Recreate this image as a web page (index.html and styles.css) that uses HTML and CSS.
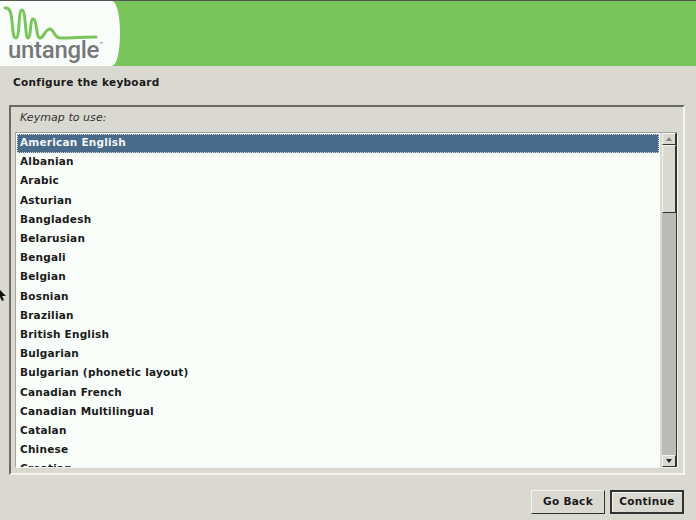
FILE: index.html
```html
<!DOCTYPE html>
<html lang="en">
<head>
<meta charset="utf-8">
<title>Configure the keyboard</title>
<link rel="stylesheet" href="styles.css">
</head>
<body>
<div class="screen">
  <header class="banner">
    <div class="logo">
      <svg class="logo-wave" width="100" height="44" viewBox="0 0 100 44"><path d="M5 7C10 6 11 12 12 20C13 30 13 37 16 37C20 37 18 9 22 9C26 9 25 37 28 37C31 37 30 18 33 18C37 18 36 37 40 37C44 37 45 28 50 28C54 28 54 37 60 37C72 37 85 36 96 36" fill="none" stroke="#79c55b" stroke-width="3" stroke-linecap="round"/></svg>
      <span class="logo-text">untangle<sup class="tm">™</sup></span>
    </div>
  </header>
  <h1 class="title">Configure the keyboard</h1>
  <section class="frame">
    <div class="prompt">Keymap to use:</div>
    <div class="listbox">
      <ul class="list">
        <li class="sel">American English</li>
        <li>Albanian</li>
        <li>Arabic</li>
        <li>Asturian</li>
        <li>Bangladesh</li>
        <li>Belarusian</li>
        <li>Bengali</li>
        <li>Belgian</li>
        <li>Bosnian</li>
        <li>Brazilian</li>
        <li>British English</li>
        <li>Bulgarian</li>
        <li>Bulgarian (phonetic layout)</li>
        <li>Canadian French</li>
        <li>Canadian Multilingual</li>
        <li>Catalan</li>
        <li>Chinese</li>
        <li>Croatian</li>
      </ul>
      <div class="scrollbar">
        <div class="arrow"><span class="tri up"></span></div>
        <div class="track">
          <div class="thumb"></div>
        </div>
        <div class="arrow"><span class="tri down"></span></div>
      </div>
    </div>
  </section>
  <footer class="actions">
    <button class="btn">Go Back</button>
    <button class="btn default">Continue</button>
  </footer>
  <svg class="cursor" width="8" height="14" viewBox="0 0 8 14"><path d="M-2 1L6 9H2L4 13L2 14L0 10L-2 12Z" fill="#111"/></svg>
</div>
</body>
</html>
```
FILE: styles.css
```css
* { box-sizing: border-box; }
html, body { margin: 0; padding: 0; }
body { font-family: "DejaVu Sans", sans-serif; background: #d9d8d1; color: #111; }
.screen { position: relative; width: 696px; height: 520px; overflow: hidden; background: #d9d8d1; display: flex; flex-direction: column; }
.banner { height: 66px; flex: none; background: #79c55b; border-top: 1px solid #555; display: flex; }
.logo { position: relative; width: 120px; height: 65px; background: #f8fdf9; border-radius: 0 8px 8px 0 / 0 32px 32px 0; overflow: hidden; }
.logo-wave { position: absolute; left: 0; top: 0; }
.logo-text { position: absolute; left: 8px; top: 37px; font-family: "Roboto", "DejaVu Sans", sans-serif; font-weight: 500; font-size: 24px; line-height: 24px; color: #77787b; letter-spacing: -0.3px; }
.tm { font-size: 6px; vertical-align: 12px; line-height: 0; letter-spacing: 0; }
.title { margin: 0; height: 34px; flex: none; padding: 9px 0 0 13px; font-size: 10.5px; line-height: 14px; font-weight: 700; letter-spacing: 0.3px; color: #1a1a1a; }
.frame { margin: 5px 11px 0 9px; height: 370px; flex: none; border: 2px solid; border-color: #6b6a66 #f4f3ee #f4f3ee #6b6a66; padding: 4px 5px 5px 4px; display: flex; flex-direction: column; }
.prompt { height: 21px; flex: none; padding: 0 0 0 5px; font-size: 11px; line-height: 14px; font-style: italic; color: #333; letter-spacing: 0.05px; }
.listbox { flex: 1; min-height: 0; display: flex; border: 1px solid; border-color: #a5a49e #f4f3ee #f4f3ee #a5a49e; background: #d9d8d1; }
.list { list-style: none; margin: 0; padding: 1px; flex: 1; min-width: 0; height: 100%; overflow: hidden; background: #f8fdf9; }
.list li { height: 19.2px; padding: 0.3px 0 0 3px; font-size: 10.5px; line-height: 17px; font-weight: 700; letter-spacing: 0.22px; color: #1a1a1a; white-space: nowrap; }
.list li.sel { height: 19px; padding-top: 0; background: #496a89; color: #f2f5f5; outline: 1px dotted #d9d8d1; outline-offset: -1px; }
.scrollbar { width: 15px; flex: none; margin-left: 2px; display: flex; flex-direction: column; background: #bcbbb5; border-right: 1px solid #333; }
.arrow { height: 12px; flex: none; background: #d9d8d1; border: 1px solid; border-color: #f4f3ee #333 #333 #f4f3ee; display: flex; align-items: center; justify-content: center; }
.tri { width: 0; height: 0; border-left: 3px solid transparent; border-right: 3px solid transparent; }
.tri.up { border-bottom: 4px solid #85847f; }
.tri.down { border-top: 4px solid #222; }
.track { flex: 1; min-height: 0; display: flex; flex-direction: column; }
.thumb { height: 68px; flex: none; background: #d9d8d1; border: 1px solid; border-color: #f4f3ee #333 #333 #f4f3ee; }
.actions { flex: 1; display: flex; justify-content: flex-end; gap: 5px; padding: 15px 12px 0 0; }
.btn { width: 74px; height: 24px; font-family: "DejaVu Sans", sans-serif; font-size: 10.5px; font-weight: 700; letter-spacing: 0.3px; color: #1a1a1a; background: #d9d8d1; border: 1px solid; border-color: #f4f3ee #333 #333 #f4f3ee; padding: 0 0 2px; }
.btn.default { border: 2px solid #333; box-shadow: inset 1px 1px 0 #f4f3ee; }
.cursor { position: absolute; left: 0; top: 287px; }
```
